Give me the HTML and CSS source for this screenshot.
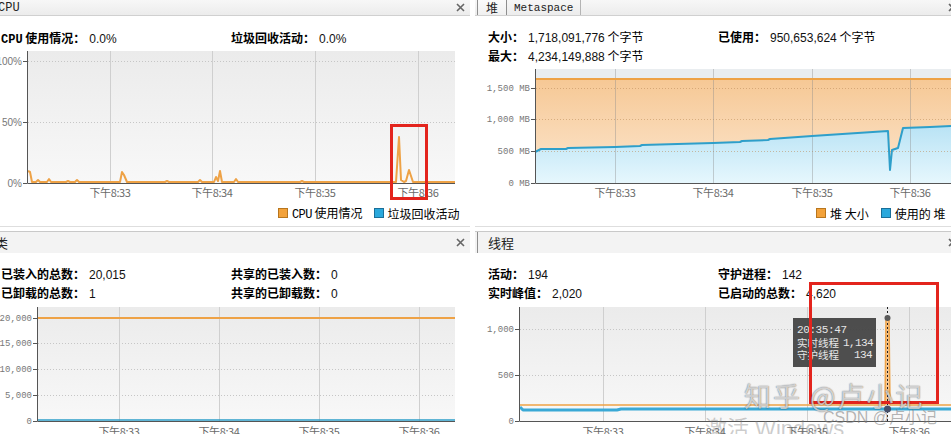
FILE: index.html
```html
<!DOCTYPE html>
<html lang="zh-CN">
<head>
    <meta charset="UTF-8">
    <title>监视</title>
    <link rel="stylesheet" href="styles.css">
</head>
<body>
<div class="board">

    <!-- CPU -->
    <section class="panel top left">
        <div class="head">
            <span class="title lat cut">CPU</span>
            <svg class="close" width="9" height="9" viewBox="0 0 9 9"><path d="M1 1L8 8M8 1L1 8"/></svg>
        </div>
        <div class="stats one">
            <div><b><span class="lat">CPU</span> 使用情况：</b><span class="num">0.0%</span></div>
            <div><b>垃圾回收活动：</b><span class="num">0.0%</span></div>
        </div>
        <svg class="chart" width="470" height="158" viewBox="0 47 470 158">
            <defs>
                <linearGradient id="bgA" x1="0" y1="0" x2="0" y2="1">
                    <stop offset="0" stop-color="#ebebeb"/><stop offset="1" stop-color="#f8f8f8"/>
                </linearGradient>
            </defs>
            <rect x="27" y="51" width="428" height="132" fill="url(#bgA)"/>
            <path class="hgrid" d="M28 61.5H455M28 122.5H455"/>
            <path class="vgrid" d="M110.5 51V183M212.5 51V183M315.5 51V183M418.5 51V183"/>
            <polyline class="ln-or" points="28,171 30,172 32,182 36,182 38,180 40,182 47,182 49,179 51,182 66,182 68,181 70,182 75,182 77,180 79,182 120,182 122,172 124,175 127,182 165,182 167,181 169,182 198,182 200,180 202,182 214,182 216,177 218,181 220,171 222,182 234,182 236,179 238,182 300,182 302,181 304,182 396,182 399,137 401,180 404,182 406,181 409,170 413,182 455,182"/>
            <path class="axis" d="M27.5 51V183.5H455M23 61.5H27M23 122.5H27M23 183.5H27"/>
            <text class="ax" x="22" y="65">100%</text>
            <text class="ax" x="22" y="126">50%</text>
            <text class="ax" x="22" y="187">0%</text>
            <text class="xl" x="110" y="197">下午8:33</text>
            <text class="xl" x="212" y="197">下午8:34</text>
            <text class="xl" x="315" y="197">下午8:35</text>
            <text class="xl" x="418" y="197">下午8:36</text>
        </svg>
        <div class="legend cpu-legend">
            <span class="key"><i class="sw or"></i><span><span class="lat">CPU</span> 使用情况</span></span>
            <span class="key"><i class="sw bl"></i>垃圾回收活动</span>
        </div>
    </section>

    <!-- 堆 / Metaspace -->
    <section class="panel top right">
        <div class="head tabs">
            <span class="tab on">堆</span>
            <span class="tab lat">Metaspace</span>
            <svg class="close" width="9" height="9" viewBox="0 0 9 9"><path d="M1 1L8 8M8 1L1 8"/></svg>
        </div>
        <div class="stats">
            <div><b>大小：</b><span class="num">1,718,091,776</span> 个字节</div>
            <div><b>已使用：</b><span class="num">950,653,624</span> 个字节</div>
            <div><b>最大：</b><span class="num">4,234,149,888</span> 个字节</div>
        </div>
        <svg class="chart" width="476" height="140" viewBox="475 65 476 140">
            <defs>
                <linearGradient id="orB" x1="0" y1="0" x2="0" y2="1">
                    <stop offset="0" stop-color="#f6c895"/><stop offset="1" stop-color="#fce7d0"/>
                </linearGradient>
                <linearGradient id="blB" x1="0" y1="0" x2="0" y2="1">
                    <stop offset="0" stop-color="#b9e3f5"/><stop offset="1" stop-color="#e6f7fd"/>
                </linearGradient>
            </defs>
            <rect x="535" y="69" width="416" height="114" fill="#e9edf0"/>
            <rect x="535" y="79" width="416" height="104" fill="url(#orB)"/>
            <polygon fill="url(#blB)" points="535,152 541,149 615,147 713,143 768,140 770,139 812,136 888,131 890,170 892,150 898,148 903,128 930,127 951,126 951,183 535,183"/>
            <path class="hgrid warm" d="M536 88.5H951M536 119.5H951M536 151.5H951"/>
            <path class="vgrid soft" d="M615.5 69V183M713.5 69V183M812.5 69V183M910.5 69V183"/>
            <path class="ln-or" d="M535 79H951"/>
            <polyline class="ln-bl" points="535,152 541,149 566,149 568,148 615,147 640,146 642,145 713,143 740,142 742,141 768,140 770,139 812,136 888,131 890,170 892,150 898,148 903,128 930,127 951,126"/>
            <path class="axis" d="M535.5 69V183.5H951M531 88.5H535M531 119.5H535M531 151.5H535M531 183.5H535"/>
            <text class="ax mono" x="530" y="91">1,500 MB</text>
            <text class="ax mono" x="530" y="122">1,000 MB</text>
            <text class="ax mono" x="530" y="154">500 MB</text>
            <text class="ax mono" x="530" y="186">0 MB</text>
            <text class="xl" x="615" y="197">下午8:33</text>
            <text class="xl" x="713" y="197">下午8:34</text>
            <text class="xl" x="812" y="197">下午8:35</text>
            <text class="xl" x="910" y="197">下午8:36</text>
        </svg>
        <div class="legend heap-legend">
            <span class="key"><i class="sw or"></i>堆 大小</span>
            <span class="key"><i class="sw bl"></i>使用的 堆</span>
        </div>
    </section>

    <!-- 类 -->
    <section class="panel bottom left">
        <div class="head">
            <span class="title cut2">类</span>
            <svg class="close" width="9" height="9" viewBox="0 0 9 9"><path d="M1 1L8 8M8 1L1 8"/></svg>
        </div>
        <div class="stats">
            <div><b>已装入的总数：</b><span class="num">20,015</span></div>
            <div><b>共享的已装入数：</b><span class="num">0</span></div>
            <div><b>已卸载的总数：</b><span class="num">1</span></div>
            <div><b>共享的已卸载数：</b><span class="num">0</span></div>
        </div>
        <svg class="chart" width="470" height="132" viewBox="0 302 470 132">
            <defs>
                <linearGradient id="bgC" x1="0" y1="0" x2="0" y2="1">
                    <stop offset="0" stop-color="#ebebeb"/><stop offset="1" stop-color="#f8f8f8"/>
                </linearGradient>
            </defs>
            <rect x="37" y="307" width="418" height="114" fill="url(#bgC)"/>
            <path class="hgrid" d="M38 343.5H455M38 369.5H455M38 395.5H455"/>
            <path class="vgrid" d="M119.5 307V421M219.5 307V421M319.5 307V421M419.5 307V421"/>
            <path class="ln-or" d="M38 318H455"/>
            <path class="ln-bl thin" d="M38 420H455"/>
            <path class="axis" d="M37.5 307V421.5H455M33 318.5H37M33 343.5H37M33 369.5H37M33 395.5H37M33 421.5H37"/>
            <text class="ax mono" x="32" y="321">20,000</text>
            <text class="ax mono" x="32" y="346">15,000</text>
            <text class="ax mono" x="32" y="372">10,000</text>
            <text class="ax mono" x="32" y="398">5,000</text>
            <text class="ax mono" x="32" y="424">0</text>
            <text class="xl" x="119" y="436">下午8:33</text>
            <text class="xl" x="219" y="436">下午8:34</text>
            <text class="xl" x="319" y="436">下午8:35</text>
            <text class="xl" x="419" y="436">下午8:36</text>
        </svg>
    </section>

    <!-- 线程 -->
    <section class="panel bottom right">
        <div class="head tabs">
            <span class="tab on single">线程</span>
            <svg class="close" width="9" height="9" viewBox="0 0 9 9"><path d="M1 1L8 8M8 1L1 8"/></svg>
        </div>
        <div class="stats">
            <div><b>活动：</b><span class="num">194</span></div>
            <div><b>守护进程：</b><span class="num">142</span></div>
            <div><b>实时峰值：</b><span class="num">2,020</span></div>
            <div><b>已启动的总数：</b><span class="num">4,620</span></div>
        </div>
        <svg class="chart" width="476" height="132" viewBox="475 302 476 132">
            <defs>
                <linearGradient id="bgD" x1="0" y1="0" x2="0" y2="1">
                    <stop offset="0" stop-color="#ebebeb"/><stop offset="1" stop-color="#f8f8f8"/>
                </linearGradient>
            </defs>
            <rect x="519" y="307" width="432" height="114" fill="url(#bgD)"/>
            <path class="hgrid" d="M520 329.5H951M520 375.5H951"/>
            <path class="vgrid" d="M603.5 307V421M705.5 307V421M807.5 307V421M909.5 307V421"/>
            <polygon fill="#f6c792" points="885,405 886,318 889,318 890,405"/>
            <polyline class="ln-or thin" points="520,405 885,405 886,318 889,318 890,405 951,405"/>
            <polyline class="ln-bl thick" points="520,407 523,410 617,410 621,409 951,409"/>
            <path class="hover" d="M887.5 307V421"/>
            <circle cx="887.5" cy="318" r="3" fill="#5a5a5a"/>
            <circle cx="887.5" cy="409" r="3.5" fill="#47506a"/>
            <path class="axis" d="M519.5 307V421.5H951M515 329.5H519M515 375.5H519M515 421.5H519"/>
            <text class="ax mono" x="514" y="332">1,000</text>
            <text class="ax mono" x="514" y="378">500</text>
            <text class="ax mono" x="514" y="424">0</text>
            <text class="xl" x="603" y="436">下午8:33</text>
            <text class="xl" x="705" y="436">下午8:34</text>
            <text class="xl" x="807" y="436">下午8:35</text>
            <text class="xl" x="909" y="436">下午8:36</text>
        </svg>
    </section>

    <div class="tip">
        <div class="tip-time">20:35:47</div>
        <div class="tip-row"><span>实时线程</span><span class="val">1,134</span></div>
        <div class="tip-row"><span>守护线程</span><span class="val">134</span></div>
    </div>

    <div class="mark mark-cpu"></div>
    <div class="mark mark-thr"></div>

    <div class="wm wm-zhihu">知乎 @卢小记</div>
    <div class="wm wm-csdn">CSDN @卢小记</div>
    <div class="wm wm-win">激活 Windows</div>
</div>
</body>
</html>
```

FILE: styles.css
```css
body {margin: 0; background: #fff; overflow: hidden; font-family: "Noto Sans CJK SC", sans-serif; font-size: 12px; color: #000;}

.board {position: relative; width: 951px; height: 434px; display: grid; grid-template-columns: 470px 476px; grid-template-rows: 227px 203px; column-gap: 5px; row-gap: 4px;}

.panel {display: flex; flex-direction: column; overflow: hidden; min-width: 0;}
.panel.top {border-bottom: 1px solid #dedede;}

.lat {font-family: "Liberation Mono", monospace;}
.num {font-family: "Liberation Sans", sans-serif; font-size: 12px; color: #111;}

/* headers */
.head {display: flex; align-items: center; flex: none; background: linear-gradient(#f7f7f7, #ececec); color: #222;}
.top .head {height: 15px; border-bottom: 1px solid #d0d0d0;}
.bottom .head {height: 21px; border-top: 1px solid #c9c9c9; background: #f3f3f3;}
.head .title {flex: 1; font-size: 12px;}
.head .cut {margin-left: -2px;}
.head .cut2 {margin-left: -5px; font-size: 13px;}
.close {flex: none; margin-right: 5px; margin-left: auto;}
.close path {stroke: #666; stroke-width: 1.6; fill: none;}
.right .close {margin-right: -6px;}

.tabs {padding-left: 2px;}
.tab {height: 100%; display: flex; align-items: center; padding: 0 7px; font-size: 11px; color: #222; border-right: 1px solid #b4b4b4;}
.tab.on {border-left: 1px solid #8e8e8e; border-right: 1px solid #8e8e8e; background: linear-gradient(#fbfbfb, #f0f0f0); font-size: 12px; padding: 0 8px;}
.top .tab.on + .tab {padding-left: 7px;}
.tab.single {border-right: none; background: none; font-size: 13px; padding: 0 10px;}

/* stats */
.stats {display: grid; grid-template-columns: 230px 1fr; grid-auto-rows: 19px; line-height: 19px; padding-top: 11px; flex: none; white-space: nowrap;}
.stats.one {padding-top: 12px;}
.left .stats {padding-left: 1px;}
.right .stats {padding-left: 13px;}
.stats b {font-weight: 700;}
.stats b .lat {font-size: 12px;}
.stats .num {margin-left: 4px;}

/* charts */
.chart {display: block; flex: none;}
.hgrid {fill: none; stroke: #c6c6c6; stroke-dasharray: 1 2;}
.hgrid.warm {stroke: rgba(190, 140, 90, 0.55);}
.vgrid {fill: none; stroke: #cfcfcf;}
.vgrid.soft {stroke: rgba(140, 140, 140, 0.4);}
.axis {fill: none; stroke: #555;}
.ln-or {fill: none; stroke: #eea246; stroke-width: 2; stroke-linejoin: round;}
.ln-or.thin {stroke-width: 1.5;}
.ln-bl {fill: none; stroke: #2e9fca; stroke-width: 2; stroke-linejoin: round;}
.ln-bl.thin {stroke-width: 1.5;}
.ln-bl.thick {stroke: #3aa9d6; stroke-width: 3;}
.hover {stroke: #222; stroke-dasharray: 2 2; fill: none;}
.ax {font: 10px "Liberation Sans", sans-serif; fill: #777; text-anchor: end;}
.ax.mono {font: 9px "Liberation Mono", monospace; fill: #777;}
.xl {font: 11px "Noto Sans CJK SC", sans-serif; fill: #6a6a6a; text-anchor: middle; letter-spacing: -0.4px;}

/* legend */
.legend {display: flex; align-items: center; gap: 11px; height: 16px; flex: none; white-space: nowrap;}
.cpu-legend {padding-left: 278px;}
.heap-legend {padding-left: 341px; gap: 12px;}
.key {display: flex; align-items: center; gap: 4px;}
.key .lat {font-size: 12px; letter-spacing: -0.6px;}
.sw {display: block; width: 8px; height: 8px; border: 1px solid;}
.sw.or {background: #f3a23a; border-color: #b8761e;}
.sw.bl {background: #2aa8dc; border-color: #1a6f99;}

/* tooltip over thread chart */
.tip {position: absolute; left: 793px; top: 318px; width: 83px; height: 49px; box-sizing: border-box; padding: 6px 4px 0 4px; background: rgba(68, 68, 68, 0.95); color: #e6e6e6; font-size: 10.5px; line-height: 12.5px; white-space: nowrap;}
.tip-time {font-family: "Liberation Mono", monospace; font-size: 11px; letter-spacing: -0.4px;}
.tip-row {display: flex; justify-content: space-between; gap: 4px;}
.tip .val {font-family: "Liberation Mono", monospace; font-size: 11px; letter-spacing: -0.6px;}

/* red annotation boxes */
.mark {position: absolute; border: 3px solid #e3241d; box-sizing: border-box;}
.mark-cpu {left: 390px; top: 124px; width: 38px; height: 76px;}
.mark-thr {left: 809px; top: 282px; width: 130px; height: 122px;}

/* watermarks */
.wm {position: absolute; white-space: nowrap;}
.wm-zhihu {left: 744px; top: 376px; font-size: 27px; letter-spacing: 2px; color: rgba(255, 255, 255, 0.7); text-shadow: 0 0 1px rgba(0, 0, 0, 0.55), 0 0 2px rgba(0, 0, 0, 0.2);}
.wm-csdn {left: 823px; top: 404px; font-family: "Liberation Sans", "Noto Sans CJK SC", sans-serif; font-size: 16px; color: rgba(120, 120, 120, 0.55);}
.wm-win {left: 705px; top: 410px; font-family: "Liberation Sans", "Noto Sans CJK SC", sans-serif; font-size: 22px; color: rgba(120, 120, 120, 0.38);}
```
